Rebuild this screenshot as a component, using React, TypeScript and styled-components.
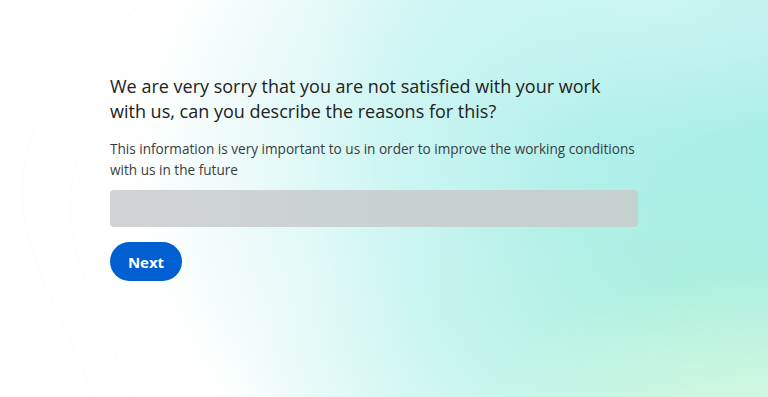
import styled, { createGlobalStyle } from 'styled-components';

const GlobalStyle = createGlobalStyle`
	html, body {
		margin: 0;
		padding: 0;
	}
	body {
		font-family: 'Open Sans', 'Noto Sans', sans-serif;
	}
`;

const Page = styled.div`
	width: 768px;
	height: 397px;
	overflow: hidden;
	position: relative;
	background:
		radial-gradient(ellipse 380px 200px at 760px 420px, rgba(212, 248, 222, 1), rgba(212, 248, 222, 0) 75%),
		radial-gradient(ellipse 420px 220px at 700px 300px, rgba(170, 240, 220, 0.85), rgba(170, 240, 220, 0) 75%),
		radial-gradient(ellipse 320px 190px at 500px 380px, rgba(200, 246, 238, 0.75), rgba(200, 246, 238, 0) 80%),
		radial-gradient(ellipse 460px 170px at 660px 0px, rgba(205, 245, 242, 0.9), rgba(205, 245, 242, 0) 80%),
		radial-gradient(ellipse 800px 560px at 820px 170px, #a6eee7 0%, #b2f0eb 30%, #cff6f3 55%, #ecfbfa 72%, #ffffff 86%);
	display: flex;
	flex-direction: column;
	padding: 74px 0 0 110px;
	box-sizing: border-box;
`;

const Curves = styled.svg`
	position: absolute;
	left: 0;
	top: 0;
	pointer-events: none;
`;

const Content = styled.div`
	position: relative;
	width: 528px;
	display: flex;
	flex-direction: column;
`;

const Title = styled.h1`
	margin: 0;
	font-size: 18px;
	font-weight: 400;
	line-height: 25px;
	color: #222;
`;

const Subtitle = styled.p`
	margin: 14px 0 0;
	font-size: 13.6px;
	line-height: 21px;
	color: #3a3d3e;
`;

const Field = styled.input`
	margin-top: 10px;
	height: 37px;
	width: 100%;
	box-sizing: border-box;
	border: none;
	border-radius: 4px;
	background: rgba(200, 203, 203, 0.85);
	outline: none;
	padding: 0 12px;
	font: inherit;
`;

const NextButton = styled.button`
	margin-top: 15px;
	align-self: flex-start;
	width: 72px;
	height: 39px;
	border: none;
	border-radius: 20px;
	background: #0060d2;
	color: #fff;
	font-family: 'Open Sans', sans-serif;
	font-weight: 700;
	font-size: 15px;
	cursor: pointer;
`;

export default function App() {
	return (
		<>
			<GlobalStyle />
			<Page>
				<Curves width="768" height="397" viewBox="0 0 768 397">
					<path
						d="M150 0 C 60 60, 10 140, 25 220 C 40 300, 80 340, 90 397"
						fill="none"
						stroke="rgba(0,0,0,0.018)"
						strokeWidth="1"
					/>
					<path
						d="M210 0 C 110 70, 60 150, 72 230 C 84 300, 120 350, 130 397"
						fill="none"
						stroke="rgba(0,0,0,0.014)"
						strokeWidth="1"
					/>
				</Curves>
				<Content>
					<Title>
						We are very sorry that you are not satisfied with your work with us, can you
						describe the reasons for this?
					</Title>
					<Subtitle>
						This information is very important to us in order to improve the working
						conditions with us in the future
					</Subtitle>
					<Field type="text" />
					<NextButton>Next</NextButton>
				</Content>
			</Page>
		</>
	);
}
